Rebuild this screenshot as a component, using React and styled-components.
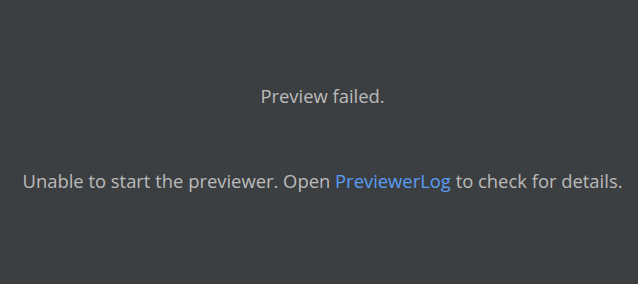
import styled, { createGlobalStyle } from "styled-components";

const GlobalStyle = createGlobalStyle`
    html, body {
        margin: 0;
        padding: 0;
        background-color: #3c3f41;
    }
`;

const Page = styled.div`
    width: 638px;
    height: 284px;
    background-color: #3c3f41;
    display: flex;
    flex-direction: column;
    align-items: center;
    padding: 85px 0 0 7px;
    box-sizing: border-box;
    font-family: "Open Sans", "Noto Sans", sans-serif;
    font-size: 18.4px;
    color: #bbbbbb;
`;

const Title = styled.p`
    margin: 0;
    line-height: 22px;
`;

const Message = styled.p`
    margin: 63px 0 0;
    line-height: 22px;
    white-space: nowrap;
`;

const Link = styled.a`
    color: #589df6;
    text-decoration: none;
    cursor: pointer;
`;

export default function App() {
    return (
        <>
            <GlobalStyle />
            <Page>
                <Title>Preview failed.</Title>
                <Message>
                    Unable to start the previewer. Open{" "}
                    <Link>PreviewerLog</Link> to check for details.
                </Message>
            </Page>
        </>
    );
}
